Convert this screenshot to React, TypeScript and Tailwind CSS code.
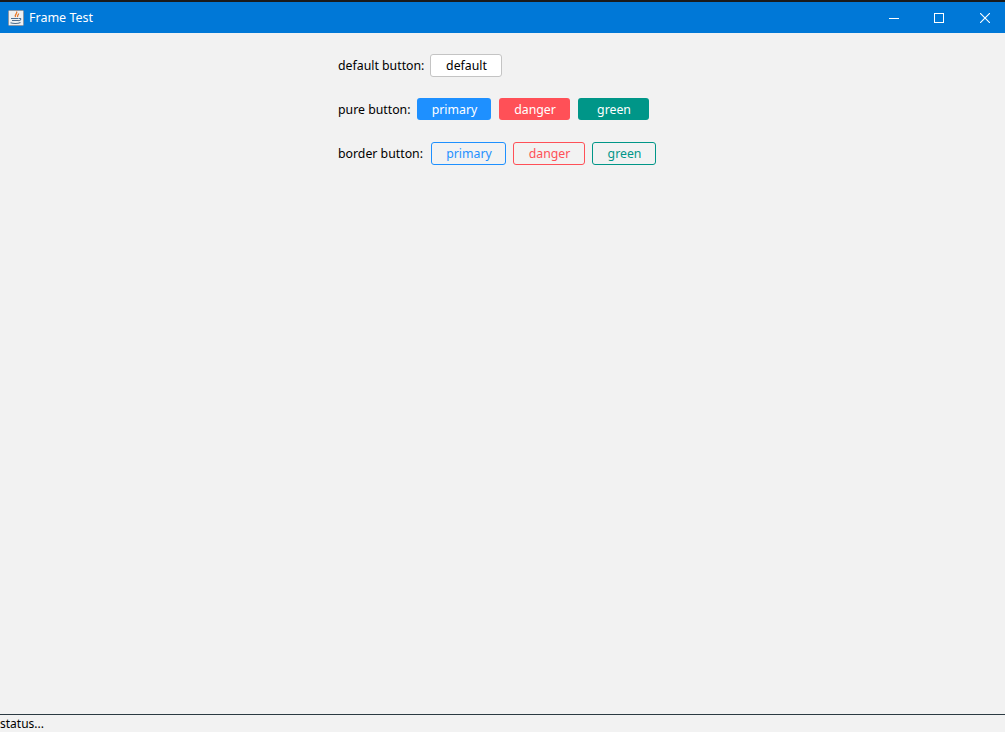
const font = "[font-family:'Noto_Sans',sans-serif]";

function Btn({ w, cls, children }: { w: string; cls: string; children: string }) {
  return (
    <div className={`${w} ${cls} rounded-[3px] flex items-center justify-center pt-[2px] pl-[1px] text-[12.3px] leading-none`}>
      {children}
    </div>
  );
}

export default function App() {
  return (
    <div className={`${font} w-[1005px] h-[732px] bg-[#f2f2f2] flex flex-col overflow-hidden text-black`}>
      <div className="h-[33px] shrink-0 bg-[#0078d7] border-t-2 border-[#1a1a1a] flex items-center justify-between">
        <div className="flex items-center pl-[8px] gap-[5px]">
          <svg width="16" height="16" viewBox="0 0 16 16">
            <rect x="0.5" y="0.5" width="15" height="15" rx="1" fill="#eef0f2" stroke="#8a97a6" />
            <path d="M8.5 1.500c1.500 2-2.500 3-1 5.500M10.500 3.500c.5 1.200-1.800 1.800-.8 3.500" fill="none" stroke="#e8792a" strokeWidth="1.300" />
            <path d="M3 8.500h7.500M4 10.500h6.500M2.500 12.800c2.500 1 7.500 1 10-.3M11 8.500c2.500-.5 2.500 1.800-.5 2.300" fill="none" stroke="#4f6f8f" strokeWidth="1.100" />
          </svg>
          <span className="text-white text-[12.5px] leading-none pt-[2px]">Frame Test</span>
        </div>
        <div className="flex items-center gap-[35px] pr-[15px]">
          <svg width="10" height="10" viewBox="0 0 10 10"><path d="M0 5.500h10" stroke="#fff" strokeWidth="1" /></svg>
          <svg width="10" height="10" viewBox="0 0 10 10"><rect x="0.500" y="0.500" width="9" height="9" fill="none" stroke="#fff" strokeWidth="1" /></svg>
          <svg className="ml-[1px]" width="10" height="10" viewBox="0 0 10 10"><path d="M0 0l10 10M10 0l-10 10" stroke="#fff" strokeWidth="1.100" /></svg>
        </div>
      </div>

      <div className="flex-1 flex flex-col pl-[338px] pt-[21px] gap-[21px] text-[12.3px]">
        <div className="flex items-stretch h-[23px]">
          <span className="w-[92px] flex items-center pt-[2px]">default button:</span>
          <Btn w="w-[72px]" cls="bg-white border border-[#c4c4c4] text-black">default</Btn>
        </div>
        <div className="flex items-stretch h-[23px] pb-[1px]">
          <span className="w-[79px] flex items-center pt-[2px]">pure button:</span>
          <div className="flex gap-[8px]">
            <Btn w="w-[74px]" cls="bg-[#1e90ff] text-white">primary</Btn>
            <Btn w="w-[71px]" cls="bg-[#ff5057] text-white">danger</Btn>
            <Btn w="w-[71px]" cls="bg-[#009688] text-white">green</Btn>
          </div>
        </div>
        <div className="flex items-stretch h-[23px]">
          <span className="w-[93px] flex items-center pt-[2px]">border button:</span>
          <div className="flex gap-[7px]">
            <Btn w="w-[75px]" cls="border border-[#1e90ff] text-[#1e90ff]">primary</Btn>
            <Btn w="w-[72px]" cls="border border-[#ff5057] text-[#ff5057]">danger</Btn>
            <Btn w="w-[64px]" cls="border border-[#009688] text-[#009688]">green</Btn>
          </div>
        </div>
      </div>

      <div className="h-[18px] shrink-0 border-t border-[#2b3a42] text-[12px] leading-[18px]">status...</div>
    </div>
  );
}
